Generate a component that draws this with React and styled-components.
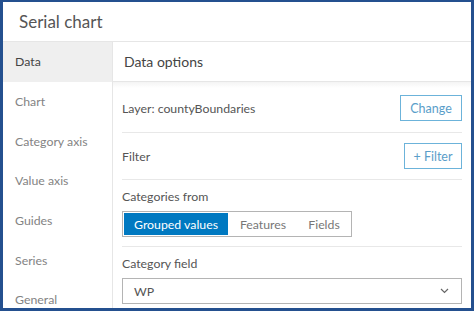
import styled, { createGlobalStyle } from "styled-components";

const Global = createGlobalStyle`
  html, body {
    margin: 0;
    padding: 0;
    background: #fff;
  }
  * {
    box-sizing: border-box;
  }
`;

const Frame = styled.div`
  width: 474px;
  height: 311px;
  border-style: solid;
  border-color: #24508f;
  border-width: 2px 3px 3px 3px;
  background: #fff;
  font-family: Lato, "Noto Sans", sans-serif;
  color: #555;
  display: flex;
  flex-direction: column;
  overflow: hidden;
`;

const Header = styled.div`
  height: 40px;
  flex-shrink: 0;
  display: flex;
  align-items: center;
  padding-left: 16px;
  font-size: 17px;
  color: #555;
  border-bottom: 1px solid #e6e6e6;
`;

const Body = styled.div`
  flex: 1;
  display: grid;
  grid-template-columns: 110px 1fr;
  min-height: 0;
`;

const Sidebar = styled.nav`
  border-right: 1px solid #e6e6e6;
  display: flex;
  flex-direction: column;
`;

const NavItem = styled.div`
  height: 39.7px;
  flex-shrink: 0;
  display: flex;
  align-items: center;
  padding-left: 12px;
  font-size: 12.3px;
  color: ${(p) => (p.$active ? "#444" : "#838383")};
  background: ${(p) => (p.$active ? "#efefef" : "transparent")};
`;

const Content = styled.div`
  display: flex;
  flex-direction: column;
  min-width: 0;
`;

const TitleRow = styled.div`
  height: 40px;
  flex-shrink: 0;
  display: flex;
  align-items: center;
  padding-left: 11px;
  font-size: 14px;
  color: #444;
  border-bottom: 1px solid #e6e6e6;
`;

const Sections = styled.div`
  padding: 0 9px;
  background: linear-gradient(#f4f4f4, #fff 6px);
`;

const Row = styled.div`
  height: ${(p) => p.$h}px;
  display: flex;
  align-items: center;
  justify-content: space-between;
  padding-top: ${(p) => p.$pt || 0}px;
  border-bottom: 1px solid #e8e8e8;
  font-size: 12.3px;
  color: #555;
`;

const Stack = styled.div`
  height: ${(p) => p.$h}px;
  display: flex;
  flex-direction: column;
  padding-top: 9px;
  gap: 7px;
  border-bottom: ${(p) => (p.$last ? "none" : "1px solid #e8e8e8")};
  font-size: 12.3px;
  color: #555;
`;

const OutlineButton = styled.button`
  height: 26px;
  width: ${(p) => p.$w}px;
  border: 1px solid #6cb3da;
  background: #fff;
  color: #5a9ec9;
  font-family: inherit;
  font-size: 12.5px;
  padding: 0;
`;

const Segmented = styled.div`
  display: inline-flex;
  align-self: flex-start;
  height: 26px;
  border: 1px solid #b4b4b4;
  padding: 1px;
`;

const Segment = styled.div`
  display: flex;
  align-items: center;
  justify-content: center;
  width: ${(p) => p.$w}px;
  font-size: 12.3px;
  background: ${(p) => (p.$active ? "#0079c1" : "transparent")};
  color: ${(p) => (p.$active ? "#fff" : "#777")};
`;

const Select = styled.div`
  height: 26px;
  border: 1px solid #b4b4b4;
  display: flex;
  align-items: center;
  justify-content: space-between;
  padding: 0 12px 0 11px;
  font-size: 12.3px;
  color: #555;
`;

const Chevron = () => (
  <svg width="9" height="6" viewBox="0 0 9 6">
    <path d="M1 1l3.5 3.5L8 1" fill="none" stroke="#666" strokeWidth="1.2" />
  </svg>
);

const navItems = ["Data", "Chart", "Category axis", "Value axis", "Guides", "Series", "General"];

export default function App() {
  return (
    <>
      <Global />
      <Frame>
        <Header>Serial chart</Header>
        <Body>
          <Sidebar>
            {navItems.map((n, i) => (
              <NavItem key={n} $active={i === 0}>
                {n}
              </NavItem>
            ))}
          </Sidebar>
          <Content>
            <TitleRow>Data options</TitleRow>
            <Sections>
              <Row $h={51} $pt={2}>
                <span>Layer: countyBoundaries</span>
                <OutlineButton $w={62}>Change</OutlineButton>
              </Row>
              <Row $h={47}>
                <span>Filter</span>
                <OutlineButton $w={58}>+ Filter</OutlineButton>
              </Row>
              <Stack $h={67}>
                <span>Categories from</span>
                <Segmented>
                  <Segment $w={104} $active>
                    Grouped values
                  </Segment>
                  <Segment $w={70}>Features</Segment>
                  <Segment $w={52}>Fields</Segment>
                </Segmented>
              </Stack>
              <Stack $h={60} $last>
                <span>Category field</span>
                <Select>
                  <span>WP</span>
                  <Chevron />
                </Select>
              </Stack>
            </Sections>
          </Content>
        </Body>
      </Frame>
    </>
  );
}
